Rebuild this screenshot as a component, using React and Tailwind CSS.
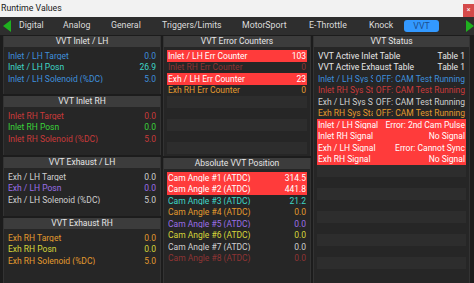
import React from "react";

const C = {
  blue: "text-[#3f8fdc]",
  cyan: "text-[#3fd6c6]",
  red: "text-[#c83a3a]",
  dimred: "text-[#8e3434]",
  green: "text-[#3ad23a]",
  grey: "text-[#cfcfcf]",
  purple: "text-[#9a6ee6]",
  orange: "text-[#e29a2e]",
  yellow: "text-[#d6d63a]",
  white: "text-[#e8e8e8]",
};

function Row({ label, value, color, hl }) {
  return (
    <div
      className={
        "flex h-[11.5px] shrink-0 items-center gap-[3px] px-[1px] leading-none " +
        (hl ? "bg-[#ff3b3b] text-white" : color)
      }
    >
      <span className="min-w-0 flex-1 overflow-hidden whitespace-nowrap">{label}</span>
      <span className="shrink-0 whitespace-nowrap">{value}</span>
    </div>
  );
}

function Panel({ title, rows, className = "", fill = 0 }) {
  return (
    <div className={"flex flex-col overflow-hidden border-x border-[#333333] bg-[#262626] " + className}>
      <div className="flex h-[11px] shrink-0 items-center justify-center bg-[#3c3c3c] leading-none text-[#e6e6e6]">
        {title}
      </div>
      <div className="flex flex-col px-[3px] pt-[3px]">
        {rows.map((r, i) => (
          <Row key={i} {...r} />
        ))}
        {Array.from({ length: fill }).map((_, i) => (
          <div
            key={"f" + i}
            className={"h-[11.5px] shrink-0 " + (i % 2 === 0 ? "bg-[#2d2d2d]" : "bg-[#262626]")}
          />
        ))}
      </div>
    </div>
  );
}

const tabs = [
  ["Digital", "w-[44px]"],
  ["Analog", "w-[48px]"],
  ["General", "w-[51px]"],
  ["Triggers/Limits", "w-[80px]"],
  ["MotorSport", "w-[67px]"],
  ["E-Throttle", "w-[60px]"],
  ["Knock", "w-[35px]"],
];

export default function App() {
  return (
    <div
      className="flex h-[283px] w-[474px] flex-col overflow-hidden bg-[#1c1c1c] text-[8.5px]"
      style={{ fontFamily: "Roboto, 'Noto Sans', sans-serif" }}
    >
      {/* title bar */}
      <div className="flex h-[17px] shrink-0 items-center justify-between bg-[#f2f2f2] pl-[1px]">
        <span className="text-[8.75px] text-[#1a1a1a]">Runtime Values</span>
        <div className="mt-[4px] flex h-[13px] w-[11px] items-center justify-center self-start bg-[#d44a4a] text-[7px] leading-none text-white">
          ×
        </div>
      </div>
      {/* tab bar */}
      <div className="flex h-[18px] shrink-0 items-center bg-[#2e2e2e] text-[8.75px] text-[#dcdcdc]">
        <svg width="8" height="12" viewBox="0 0 8 12" className="ml-[3px] mr-[8px] shrink-0">
          <polygon points="8,0 0,6 8,12" fill="#1fb01f" />
        </svg>
        <div className="flex items-center">
          {tabs.map(([t, w]) => (
            <span key={t} className={"shrink-0 whitespace-nowrap " + w}>
              {t}
            </span>
          ))}
        </div>
        <span className="flex h-[12px] w-[35px] shrink-0 items-center justify-center rounded-[3px] bg-[#3399ff] leading-none text-[#1d4f8f]">
          VVT
        </span>
        <svg width="8" height="12" viewBox="0 0 8 12" className="ml-auto shrink-0">
          <polygon points="0,0 8,6 0,12" fill="#1fb01f" />
        </svg>
      </div>
      {/* content */}
      <div className="grid min-h-0 flex-1 grid-cols-[158px_148px_157px] gap-x-[2px] pl-[3px] pt-[1px]">
        <div className="flex min-h-0 flex-col gap-[2px]">
          <Panel
            className="h-[58px]"
            title="VVT Inlet / LH"
            rows={[
              { label: "Inlet / LH Target", value: "0.0", color: C.blue },
              { label: "Inlet / LH Posn", value: "26.9", color: C.cyan },
              { label: "Inlet / LH Solenoid (%DC)", value: "5.0", color: C.blue },
            ]}
          />
          <Panel
            className="h-[59px]"
            title="VVT Inlet RH"
            rows={[
              { label: "Inlet RH Target", value: "0.0", color: C.red },
              { label: "Inlet RH Posn", value: "0.0", color: C.green },
              { label: "Inlet RH Solenoid (%DC)", value: "5.0", color: C.red },
            ]}
          />
          <Panel
            className="h-[59px]"
            title="VVT Exhaust / LH"
            rows={[
              { label: "Exh / LH Target", value: "0.0", color: C.grey },
              { label: "Exh / LH Posn", value: "0.0", color: C.purple },
              { label: "Exh / LH Solenoid (%DC)", value: "5.0", color: C.grey },
            ]}
          />
          <Panel
            className="flex-1"
            title="VVT Exhaust RH"
            rows={[
              { label: "Exh RH Target", value: "0.0", color: C.orange },
              { label: "Exh RH Posn", value: "0.0", color: C.yellow },
              { label: "Exh RH Solenoid (%DC)", value: "5.0", color: C.orange },
            ]}
          />
        </div>
        <div className="flex min-h-0 flex-col gap-[2px]">
          <Panel
            className="h-[120px]"
            title="VVT Error Counters"
            rows={[
              { label: "Inlet / LH Err Counter", value: "103", hl: true },
              { label: "Inlet RH Err Counter", value: "0", color: C.dimred },
              { label: "Exh / LH Err Counter", value: "23", hl: true },
              { label: "Exh RH Err Counter", value: "0", color: C.orange },
            ]}
            fill={5}
          />
          <Panel
            className="flex-1"
            title="Absolute VVT Position"
            rows={[
              { label: "Cam Angle #1 (ATDC)", value: "314.5", hl: true },
              { label: "Cam Angle #2 (ATDC)", value: "441.8", hl: true },
              { label: "Cam Angle #3 (ATDC)", value: "21.2", color: C.cyan },
              { label: "Cam Angle #4 (ATDC)", value: "0.0", color: C.orange },
              { label: "Cam Angle #5 (ATDC)", value: "0.0", color: C.purple },
              { label: "Cam Angle #6 (ATDC)", value: "0.0", color: C.yellow },
              { label: "Cam Angle #7 (ATDC)", value: "0.0", color: C.grey },
              { label: "Cam Angle #8 (ATDC)", value: "0.0", color: C.dimred },
            ]}
          />
        </div>
        <div className="flex min-h-0 flex-col">
          <Panel
            className="flex-1"
            title="VVT Status"
            rows={[
              { label: "VVT Active Inlet Table", value: "Table 1", color: C.white },
              { label: "VVT Active Exhaust Table", value: "Table 1", color: C.white },
              { label: "Inlet / LH Sys Status", value: "OFF: CAM Test Running", color: C.blue },
              { label: "Inlet RH Sys Status", value: "OFF: CAM Test Running", color: C.red },
              { label: "Exh / LH Sys Status", value: "OFF: CAM Test Running", color: C.grey },
              { label: "Exh RH Sys Status", value: "OFF: CAM Test Running", color: C.orange },
              { label: "Inlet / LH Signal", value: "Error: 2nd Cam Pulse", hl: true },
              { label: "Inlet RH Signal", value: "No Signal", hl: true },
              { label: "Exh / LH Signal", value: "Error: Cannot Sync", hl: true },
              { label: "Exh RH Signal", value: "No Signal", hl: true },
            ]}
            fill={10}
          />
        </div>
      </div>
    </div>
  );
}
